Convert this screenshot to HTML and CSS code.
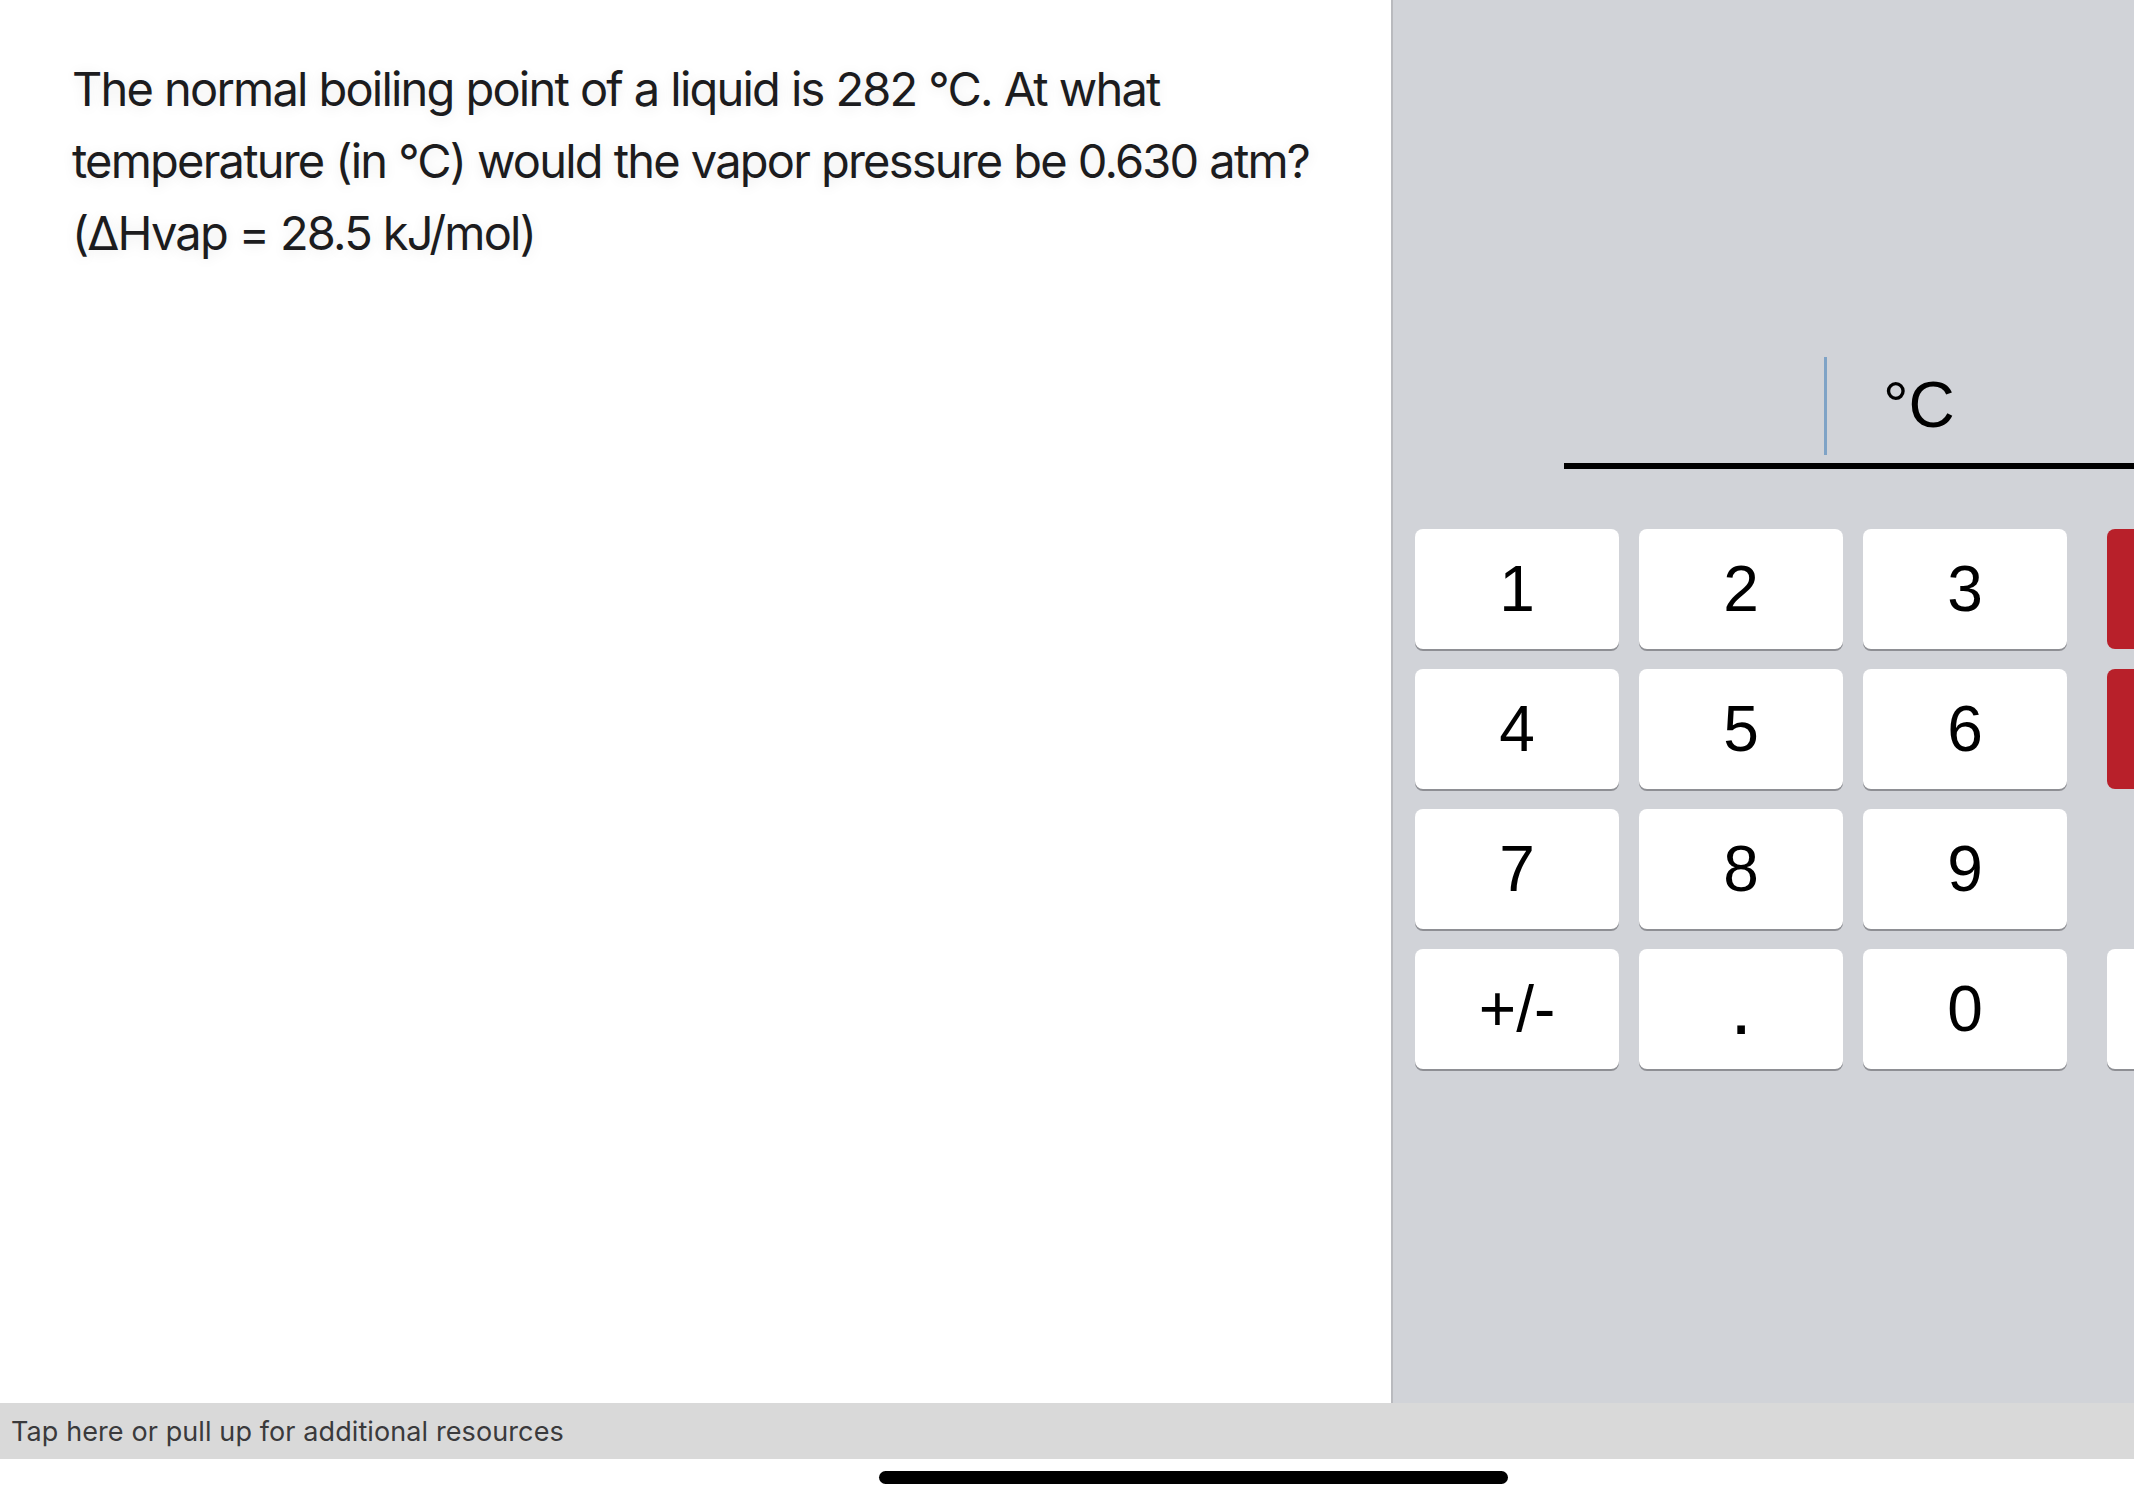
FILE: index.html
```html
<!DOCTYPE html>
<html lang="en">
<head>
<meta charset="utf-8">
<title>Question</title>
<link rel="stylesheet" href="styles.css">
</head>
<body>
<div class="screen">
  <div class="main">
    <section class="question">
      <p class="question-text">The normal boiling point of a liquid is 282 °C. At what temperature (in °C) would the vapor pressure be 0.630 atm? (ΔHvap = 28.5 kJ/mol)</p>
    </section>
    <section class="answer-pane">
      <div class="answer">
        <div class="answer-input"><span class="cursor"></span></div>
        <div class="unit">°C</div>
      </div>
      <div class="keypad">
        <div class="key">1</div>
        <div class="key">2</div>
        <div class="key">3</div>
        <div class="key side red"></div>
        <div class="key">4</div>
        <div class="key">5</div>
        <div class="key">6</div>
        <div class="key side red"></div>
        <div class="key">7</div>
        <div class="key">8</div>
        <div class="key">9</div>
        <div class="key side empty"></div>
        <div class="key">+/-</div>
        <div class="key dot">.</div>
        <div class="key">0</div>
        <div class="key side"></div>
      </div>
    </section>
  </div>
  <div class="resources">Tap here or pull up for additional resources</div>
  <div class="home-area"><div class="home-indicator"></div></div>
</div>
</body>
</html>
```
FILE: styles.css
```css
html, body {
  margin: 0;
  padding: 0;
  background: #ffffff;
}

.screen {
  width: 2134px;
  height: 1488px;
  display: flex;
  flex-direction: column;
  overflow: hidden;
}

.main {
  height: 1403px;
  display: flex;
  flex-direction: row;
}

.question {
  width: 1391px;
  flex: none;
  background: #ffffff;
  box-sizing: border-box;
  padding: 53px 40px 0 72px;
}

.question-text {
  margin: 0;
  font-family: "Inter", "Noto Sans", sans-serif;
  font-size: 47px;
  line-height: 72px;
  color: #1c1c1e;
  letter-spacing: -1.8px;
  word-spacing: 0.5px;
  text-shadow: 0 2px 14px rgba(0, 0, 0, 0.09);
}

.answer-pane {
  flex: 1;
  background: #d1d3d8;
  border-left: 2px solid #b9babe;
  overflow: hidden;
  min-width: 0;
}

.answer {
  margin-left: 171px;
  padding-top: 357px;
  display: flex;
  align-items: flex-end;
  border-bottom: 6px solid #000000;
  width: 800px;
}

.answer-input {
  width: 263px;
  height: 106px;
  display: flex;
  justify-content: flex-end;
  align-items: flex-start;
}

.cursor {
  display: block;
  width: 3px;
  height: 98px;
  background: #7fa3c6;
}

.unit {
  font-family: "Liberation Sans", Arial, sans-serif;
  font-size: 64px;
  line-height: 1;
  color: #000000;
  margin-left: 56px;
  padding-bottom: 26px;
}

.keypad {
  margin-top: 60px;
  margin-left: 22px;
  display: grid;
  grid-template-columns: 204px 204px 204px 224px;
  grid-auto-rows: 120px;
  column-gap: 20px;
  row-gap: 20px;
  width: 1000px;
}

.key {
  background: #ffffff;
  border-radius: 8px;
  box-shadow: 0 2px 0 #8e8f94;
  display: flex;
  align-items: center;
  justify-content: center;
  font-family: "Liberation Sans", Arial, sans-serif;
  font-size: 64px;
  color: #000000;
}

.key.side {
  margin-left: 20px;
}

.key.red {
  background: #b8202a;
  box-shadow: none;
}

.key.empty {
  background: transparent;
  box-shadow: none;
}

.key.dot {
  font-size: 80px;
  padding-bottom: 4px;
  box-sizing: border-box;
}

.resources {
  height: 56px;
  background: #d9d9d9;
  display: flex;
  align-items: center;
  padding-left: 11px;
  font-family: "Inter", "Noto Sans", sans-serif;
  font-size: 27px;
  letter-spacing: 0.1px;
  color: #3a3a3c;
}

.home-area {
  flex: 1;
  background: #ffffff;
  position: relative;
}

.home-indicator {
  position: absolute;
  left: 879px;
  top: 12px;
  width: 629px;
  height: 13px;
  border-radius: 7px;
  background: #000000;
}
```
